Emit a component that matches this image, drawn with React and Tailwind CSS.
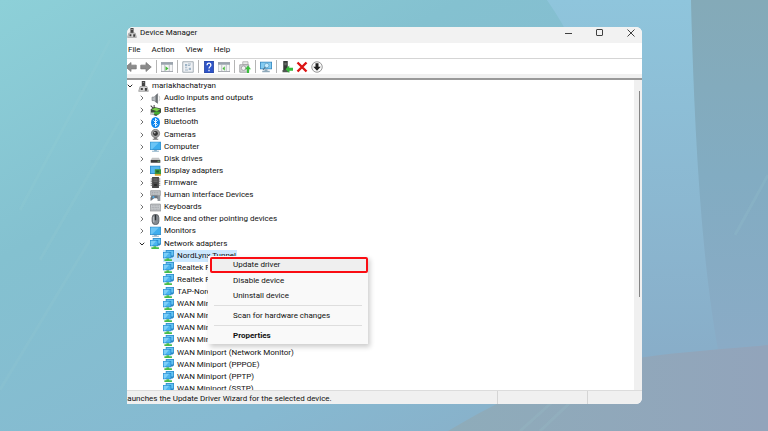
import { ChevronDown, ChevronRight } from 'lucide-react';

const MENUS = ['File', 'Action', 'View', 'Help'];

const CATEGORIES = [
  { label: 'Audio inputs and outputs', icon: 'audio' },
  { label: 'Batteries', icon: 'battery' },
  { label: 'Bluetooth', icon: 'bluetooth' },
  { label: 'Cameras', icon: 'camera' },
  { label: 'Computer', icon: 'monitor' },
  { label: 'Disk drives', icon: 'disk' },
  { label: 'Display adapters', icon: 'display' },
  { label: 'Firmware', icon: 'firmware' },
  { label: 'Human Interface Devices', icon: 'hid' },
  { label: 'Keyboards', icon: 'keyboard' },
  { label: 'Mice and other pointing devices', icon: 'mouse' },
  { label: 'Monitors', icon: 'monitor' },
  { label: 'Network adapters', icon: 'network', open: true },
];

const ADAPTERS = [
  'NordLynx Tunnel',
  'Realtek PCIe',
  'Realtek PCIe',
  'TAP-NordVPN',
  'WAN Miniport',
  'WAN Miniport',
  'WAN Miniport',
  'WAN Miniport',
  'WAN Miniport (Network Monitor)',
  'WAN Miniport (PPPOE)',
  'WAN Miniport (PPTP)',
  'WAN Miniport (SSTP)',
];

// null marks a separator
const TOOLS = [
  ['back', 'Back'],
  ['forward', 'Forward'],
  null,
  ['tree', 'Show/hide console tree'],
  null,
  ['properties', 'Properties'],
  null,
  ['help', 'Help'],
  ['action', 'Show/hide action pane'],
  null,
  ['update', 'Update device driver'],
  null,
  ['scan', 'Scan for hardware changes'],
  null,
  ['enable', 'Enable device'],
  ['remove', 'Uninstall device'],
  ['disable', 'Disable device'],
];

const panel = (
  <>
    <path d="M0 2h16v12H0z" fill="#f4f5f6" stroke="#8c9299" />
    <path d="M0 2h16v3H0z" fill="#9aa3ad" />
    <path d="M5 5v9M11 5v9" stroke="#a9afb5" />
  </>
);

const ICONS = {
  pc: (
    <>
      <path d="M5.500 0h5v8h-5z" fill="#444" />
      <path d="M7 2h2v1H7z" fill="#ddd" />
      <path d="M3 8h10l2 7H1z" fill="#d5d5d5" stroke="#8a8a8a" />
      <path d="M4 10h3v3H4zM10 10h3v4h-3z" fill="#3f3f3f" />
    </>
  ),
  audio: (
    <>
      <path d="M3 6h3l5-5v14l-5-4H3z" fill="#b9bdc1" stroke="#777c80" />
      <path d="M8 4l3-3v14l-3-2z" fill="#6c7074" />
      <path d="M13 4c1.500 2 1.500 6 0 8" stroke="#bbb" fill="none" />
    </>
  ),
  battery: (
    <>
      <path d="M1 1l4 4M6 0v4" stroke="#444" strokeWidth="1.500" />
      <path d="M1 6l5-3 10 2v6l-7 5-8-3z" fill="#3d4a3c" />
      <path d="M2 6l6-2 7 2-5 3z" fill="#78cf48" />
      <path d="M5 11l4-2 6 1-3 4-7-1z" fill="#45ad31" />
      <path d="M0 11h6v3H0z" fill="#c9ccca" />
    </>
  ),
  bluetooth: (
    <>
      <ellipse cx="8" cy="8" rx="6.500" ry="8" fill="#0a84ee" />
      <path d="M5 5l6 6-3 3V2l3 3-6 6" fill="none" stroke="#fff" strokeWidth="1.300" />
    </>
  ),
  camera: (
    <>
      <circle cx="8" cy="6.500" r="6" fill="#a5a5a5" stroke="#6e6e6e" />
      <circle cx="8" cy="6.500" r="3.500" fill="#333" />
      <circle cx="7" cy="5.500" r="1.200" fill="#ddd" />
      <path d="M6 12h4v2h2v1.500H4V14h2z" fill="#777" />
    </>
  ),
  monitor: (
    <>
      <path d="M0 1h16v12H0z" fill="#3a8fc8" />
      <path d="M1 2h14v10H1z" fill="#3faeee" />
      <path d="M1 2h12L3 12H1z" fill="#6cc5f6" />
      <path d="M6 13h4v1h3v1.500H3V14h3z" fill="#8fb3c9" />
    </>
  ),
  disk: (
    <>
      <path d="M3 7h10l2 3H1z" fill="#c4c4c4" />
      <path d="M1 10h14v4H1z" fill="#3b3b3b" />
      <path d="M11 12h3" stroke="#8de08a" />
    </>
  ),
  display: (
    <>
      <path d="M0 1h15v12H0z" fill="#2b86c9" />
      <path d="M1 2h13v10H1z" fill="#55b7ef" />
      <path d="M7 6h9v7H7z" fill="#39963c" />
      <path d="M9 8h4v3H9z" fill="#245e2b" />
      <path d="M7 13h9v2.500H7z" fill="#dbab34" />
    </>
  ),
  firmware: (
    <>
      <path d="M3 0h10v16H3z" fill="#4a4a4a" />
      <path d="M1 3h2M1 6h2M1 9h2M1 12h2M13 3h2M13 6h2M13 9h2M13 12h2" stroke="#777" strokeWidth="1.500" />
      <path d="M5 3h6M5 6h6" stroke="#8a8a8a" />
      <path d="M6 10h4v3H6z" fill="#2b2b2b" />
    </>
  ),
  hid: (
    <>
      <path d="M1 1h14v7H1z" fill="#c3c6c9" stroke="#83878b" />
      <path d="M3 3.500h10M3 6h10" stroke="#90949a" strokeDasharray="1.500 1" />
      <path d="M1 16c-1-5 0-8 3-8h5c4 0 6 3 5 8l-4-4H6z" fill="#6c737b" />
      <circle cx="5" cy="10.500" r="1.600" fill="#51aae3" />
      <path d="M11 8h4v8h-4z" fill="#90969c" />
    </>
  ),
  keyboard: (
    <>
      <path d="M1 3h14l1 10H0z" fill="#c7cacd" stroke="#85898d" />
      <path d="M3 5.500h10M2.500 8h11M2 10.500h12" stroke="#9a9ea3" strokeDasharray="1.500 .7" />
    </>
  ),
  mouse: (
    <>
      <rect x="3" y=".5" width="10" height="15" rx="5" fill="#858b91" stroke="#4d5257" />
      <path d="M5.500 4v8" stroke="#c9cdd1" strokeWidth="1.500" />
      <path d="M8 1v8" stroke="#2e3236" strokeWidth="2" />
    </>
  ),
  network: (
    <>
      <path d="M4 0h12v9l-2 2H4z" fill="#2b86c4" />
      <path d="M5 1h10v7H5z" fill="#66c3f3" />
      <path d="M0 3h12v9H0z" fill="#2386cc" />
      <path d="M1 4h10v7H1z" fill="#4cb5f0" />
      <path d="M1 4h8l-6 7H1z" fill="#7dcff8" />
      <path d="M5 12h4v1.500h4V16H2v-2.500h3z" fill="#46bd4b" />
    </>
  ),
  back: <path d="M1 8l7-6v3.500h7v5H8V14z" fill="#8b8b8b" stroke="#7b7b7b" />,
  forward: <path d="M15 8L8 2v3.500H1v5h7V14z" fill="#8b8b8b" stroke="#7b7b7b" />,
  tree: (
    <>
      {panel}
      <path d="M6 7l4 3-4 3z" fill="#42ba35" />
    </>
  ),
  properties: (
    <>
      <path d="M1 1h14v14H1z" fill="#eef1f4" stroke="#8a949e" />
      <path d="M4 4h3v3H4zM9 9h3v3H9z" fill="#9db4c7" />
      <path d="M8 4h4M8 6h3M4 9h3M4 12h4" stroke="#8aa2b6" />
    </>
  ),
  help: (
    <>
      <path d="M2 0h12v16H2z" fill="#2f55c8" stroke="#1f3c98" />
      <path d="M5.500 5.500c0-3.500 5-3.500 5 0 0 2-2.500 2-2.500 4.500M8 11.500v2" fill="none" stroke="#fff" strokeWidth="1.700" />
    </>
  ),
  action: (
    <>
      {panel}
      <path d="M9 7l-3 3 3 3z" fill="#42ba35" />
    </>
  ),
  update: (
    <>
      <path d="M5 1h7v4H5z" fill="#e8e8e8" stroke="#a5a5a5" />
      <path d="M1 5h12v8l-3 2H1z" fill="#d5d7d8" stroke="#8f9294" />
      <circle cx="6" cy="9.500" r="3" fill="#f2f2f2" stroke="#8f9294" />
      <path d="M12 6l4 5h-2.500v5h-3v-5H8z" fill="#3bbf3d" />
    </>
  ),
  scan: (
    <>
      <path d="M0 1h16v10H0z" fill="#3585bd" />
      <path d="M1 2h14v8H1z" fill="#83cbf1" />
      <circle cx="9" cy="6" r="3" fill="#c7ebfd" stroke="#5f9dc2" />
      <path d="M7 8l-3 4" stroke="#55748a" strokeWidth="1.500" />
      <path d="M6 11h4v2h3v2H3v-2h3z" fill="#8fa9ba" />
    </>
  ),
  enable: (
    <>
      <path d="M3 0h6v12H3z" fill="#363b38" />
      <path d="M4.500 3h3M4.500 5h3" stroke="#8c918d" />
      <path d="M2 12h9v3H2z" fill="#515753" />
      <path d="M6 11l5-5v3h5v4h-5v3z" fill="#35b83a" />
    </>
  ),
  remove: <path d="M2 2l12 12M14 2L2 14" stroke="#dc1414" strokeWidth="3.200" />,
  disable: (
    <>
      <circle cx="8" cy="8" r="7" fill="#fafafa" stroke="#777" />
      <path d="M6 3h4v4.500h3L8 13 3 7.500h3z" fill="#222" />
    </>
  ),
};

function Icon({ name, className = 'size-3' }) {
  return (
    <svg viewBox="0 0 16 16" className={`shrink-0 ${className}`} aria-hidden="true">
      {ICONS[name]}
    </svg>
  );
}

function Wallpaper() {
  return (
    <svg
      viewBox="0 0 768 431"
      preserveAspectRatio="none"
      className="absolute inset-0 -z-10 h-full w-full"
      aria-hidden="true"
    >
      <defs>
        <linearGradient id="base" x1="0" y1="0" x2="1" y2="1">
          <stop offset="0" stopColor="#8dd0d8" />
          <stop offset=".3" stopColor="#84c1d0" />
          <stop offset=".65" stopColor="#86b9d1" />
          <stop offset="1" stopColor="#8ba8c2" />
        </linearGradient>
        <linearGradient id="light" x1="0" y1="0" x2="0" y2="1">
          <stop offset="0" stopColor="#8fc5dc" />
          <stop offset="1" stopColor="#88adc8" />
        </linearGradient>
        <linearGradient id="edge" x1="0" y1="0" x2="0" y2="1">
          <stop offset="0" stopColor="#84aab8" />
          <stop offset=".5" stopColor="#82acc2" />
          <stop offset="1" stopColor="#8aabc6" />
        </linearGradient>
        <linearGradient id="hill" x1="0" y1="0" x2="1" y2="0">
          <stop offset="0" stopColor="#8eacba" />
          <stop offset="1" stopColor="#92a4bb" />
        </linearGradient>
      </defs>
      <path d="M0 0h768v431H0z" fill="url(#base)" />
      <path d="M547 0h144c3 110 10 240 28 355L640 365c-10-170-40-290-93-365z" fill="url(#light)" />
      <path d="M691 0h77v350h-50C700 250 694 120 691 0z" fill="url(#edge)" />
      <path d="M448 431c60-36 118-62 190-73 45-7 90-9 130-13v86z" fill="url(#hill)" />
      <path
        d="M20 210L110 40M40 260l80-140M0 390l90-150M520 431l40-36M540 431l36-34M735 235l33-60"
        stroke="#a5d3d8"
        strokeOpacity=".12"
        strokeWidth="3"
      />
    </svg>
  );
}

function TreeRow({ label, icon, open, leaf, selected, className }) {
  const Chevron = open ? ChevronDown : ChevronRight;
  return (
    <li role="treeitem" aria-expanded={leaf ? undefined : !!open} className={`flex items-center ${className}`}>
      {!leaf && (
        <button type="button" aria-label={`Toggle ${label}`} className="mr-1 shrink-0">
          <Chevron
            className={`size-2 ${open ? 'text-neutral-800' : 'text-neutral-500'}`}
            strokeWidth={3}
          />
        </button>
      )}
      <span className={`flex h-3 items-center gap-[3px] pr-px ${selected ? 'bg-[#cce8ff]' : ''}`}>
        <Icon name={icon} className="size-[11px]" />
        {label}
      </span>
    </li>
  );
}

function ContextMenu() {
  const item = 'h-[15px] pl-[25px] text-left';
  return (
    <div
      role="menu"
      className="absolute top-[176px] left-[81px] flex w-40 flex-col bg-[#f9f9f9] py-px shadow-[2px_3px_5px_rgba(0,0,0,0.2)]"
    >
      <button
        type="button"
        role="menuitem"
        className="ml-0.5 h-4 rounded-xs border-2 border-[#fa0d13] bg-[#efefef] pl-[21px] text-left"
      >
        Update driver
      </button>
      <button type="button" role="menuitem" className={item}>Disable device</button>
      <button type="button" role="menuitem" className={item}>Uninstall device</button>
      <hr className="mx-1.5 my-0.5 border-[#dedede]" />
      <button type="button" role="menuitem" className={item}>Scan for hardware changes</button>
      <hr className="mx-1.5 my-0.5 border-[#dedede]" />
      <button type="button" role="menuitem" className={`${item} font-bold`}>Properties</button>
    </div>
  );
}

export default function App() {
  return (
    <main className="relative isolate flex h-screen py-[27px] pr-[126px] pl-[127px] font-[Roboto,'Open_Sans',sans-serif] text-[8px] leading-3 text-[#111]">
      <Wallpaper />
      <section className="flex min-w-0 flex-1 flex-col overflow-hidden rounded-md rounded-bl-none bg-white">
        <header className="flex h-4 shrink-0 items-center bg-[#f2f2f2] pb-1">
          <Icon name="pc" className="size-[10px]" />
          <h1 className="ml-[3px] flex-1">Device Manager</h1>
          <div className="flex gap-[19px] pr-[5px]">
            <button type="button" aria-label="Minimize">
              <svg viewBox="0 0 12 12" className="size-3 stroke-neutral-700">
                <path d="M2 6.500h7" />
              </svg>
            </button>
            <button type="button" aria-label="Maximize">
              <svg viewBox="0 0 12 12" className="size-3 fill-none stroke-neutral-700">
                <rect x="2.500" y="2.500" width="6" height="6" rx=".5" />
              </svg>
            </button>
            <button type="button" aria-label="Close">
              <svg viewBox="0 0 12 12" className="size-3 stroke-neutral-700">
                <path d="M2.500 2.500l7 7M9.500 2.500l-7 7" />
              </svg>
            </button>
          </div>
        </header>

        <nav className="flex h-4 shrink-0 items-center gap-[11px] border-b border-[#d5d5d5] pb-px pl-px">
          {MENUS.map((menu) => (
            <button key={menu} type="button">{menu}</button>
          ))}
        </nav>

        <div className="-ml-1 flex h-[15px] shrink-0 items-center">
          {TOOLS.map((tool, i) =>
            tool ? (
              <button key={i} type="button" aria-label={tool[1]} className="flex w-[15px] justify-center">
                <Icon name={tool[0]} />
              </button>
            ) : (
              <span key={i} className="flex w-1.5 justify-center">
                <span className="h-[13px] w-px bg-[#b5b5b5]" />
              </span>
            )
          )}
        </div>
        <div className="h-1.5 shrink-0 border-b-2 border-[#999] bg-[#f0f0f0]" />

        <div className="relative flex min-h-0 flex-1 overflow-hidden">
          <ul role="tree" className="grid h-[315px] flex-1 auto-rows-fr">
            <TreeRow label="mariakhachatryan" icon="pc" open className="-ml-px" />
            {CATEGORIES.map((category) => (
              <TreeRow key={category.label} {...category} className="pl-[11px]" />
            ))}
            {ADAPTERS.map((label, i) => (
              <TreeRow key={i} label={label} icon="network" leaf selected={i === 0} className="pl-9" />
            ))}
          </ul>
          <div className="flex w-2 justify-end bg-[#f0f0f0] pt-[11px] pr-0.5">
            <div className="h-[69%] w-px bg-[#858585]" />
          </div>
          <ContextMenu />
        </div>

        <footer className="flex h-3.5 shrink-0 border-t border-[#dcdcdc] bg-[#f0f0f0]">
          <p className="-ml-1 flex-1 pt-0.5">Launches the Update Driver Wizard for the selected device.</p>
          <span className="w-[90px] border-l border-[#d5d5d5]" />
          <span className="w-[55px] border-l border-[#d5d5d5]" />
        </footer>
      </section>
    </main>
  );
}
